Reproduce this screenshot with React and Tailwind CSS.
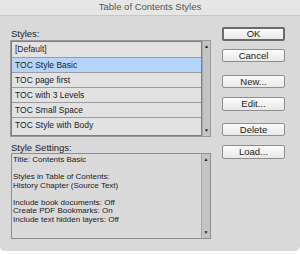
import React from "react";

const font = { fontFamily: '"Liberation Sans", Arial, sans-serif' };

function Btn({ children, primary, className = "" }) {
  return (
    <div
      className={
        "flex items-center justify-center w-[63px] rounded-[2px] bg-gradient-to-b from-[#fbfbfb] to-[#e9e9e9] text-[9.5px] text-[#222] leading-none " +
        (primary ? "border-2 border-[#6b6b6b]" : "border border-[#8e8e8e]") +
        " " +
        className
      }
    >
      {children}
    </div>
  );
}

function ScrollBar({ className = "" }) {
  return (
    <div className={"flex flex-col justify-between items-center bg-[#c4c4c4] border-l border-[#a8a8a8] " + className}>
      <span className="text-[5px] leading-none mt-[3px] text-[#222]">▲</span>
      <span className="text-[5px] leading-none mb-[3px] text-[#222]">▼</span>
    </div>
  );
}

export default function App() {
  const rows = [
    "[Default]",
    "TOC Style Basic",
    "TOC page first",
    "TOC with 3 Levels",
    "TOC Small Space",
    "TOC Style with Body",
  ];
  return (
    <div className="w-[300px] h-[254px] bg-white" style={font}>
      <div className="w-[300px] h-[251px] bg-[#d9d9d9] rounded-b-[5px] flex flex-col">
        <div className="h-[16px] bg-[#e6e6e6] border-b border-[#c6c6c6] flex items-center justify-center text-[9.5px] text-[#555]">
          Table of Contents Styles
        </div>
        <div className="flex">
          <div className="w-[211px] pl-[10px] flex flex-col">
            <div className="mt-[12px] h-[12px] text-[9.5px] leading-[12px] text-[#222] pl-[1px]">Styles:</div>
            <div className="h-[97px] flex border border-[#9a9a9a] bg-[#e2e2e2]">
              <div className="flex-1 flex flex-col border border-[#4a8ad0]">
                {rows.map((r, i) => (
                  <div
                    key={r}
                    className={
                      "h-[15px] flex items-center pl-[3px] text-[8.5px] text-[#222] " +
                      (i > 0 ? "border-t border-[#9c9c9c] " : "") +
                      (i === 1 ? "bg-[#b5d4fa]" : "bg-[#e2e2e2]")
                    }
                  >
                    {r}
                  </div>
                ))}
              </div>
              <ScrollBar className="w-[8px]" />
            </div>
            <div className="mt-[5px] h-[11px] text-[9.5px] leading-[11px] text-[#222] pl-[1px]">Style Settings:</div>
            <div className="ml-[1px] w-[200px] h-[86px] flex border border-[#8e8e8e] bg-[#dadada]">
              <div className="flex-1 pl-[1px] pt-[2px] text-[8px] leading-[8.5px] text-[#222]">
                <div>Title: Contents Basic</div>
                <div className="h-[8.5px]" />
                <div>Styles in Table of Contents:</div>
                <div>History Chapter (Source Text)</div>
                <div className="h-[8.5px]" />
                <div>Include book documents: Off</div>
                <div>Create PDF Bookmarks: On</div>
                <div>Include text hidden layers: Off</div>
              </div>
              <ScrollBar className="w-[9px]" />
            </div>
          </div>
          <div className="pl-[11px] flex flex-col">
            <Btn primary className="mt-[11px] h-[14px]">OK</Btn>
            <Btn className="mt-[8px] h-[13px]">Cancel</Btn>
            <Btn className="mt-[13px] h-[13px]">New...</Btn>
            <Btn className="mt-[9px] h-[14px]">Edit...</Btn>
            <Btn className="mt-[12px] h-[13px]">Delete</Btn>
            <Btn className="mt-[9px] h-[14px]">Load...</Btn>
          </div>
        </div>
      </div>
    </div>
  );
}
